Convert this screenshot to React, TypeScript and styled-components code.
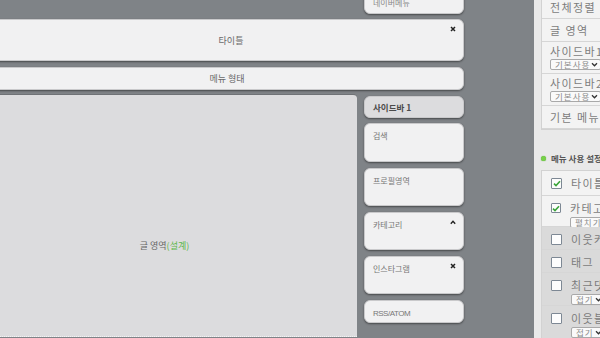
import styled, { createGlobalStyle } from 'styled-components'

const GlobalStyle = createGlobalStyle`
  html, body {
    margin: 0;
    padding: 0;
    background: #7f8387;
  }
  * { box-sizing: border-box; }
`

const Screen = styled.div`
  width: 600px;
  height: 338px;
  overflow: hidden;
  display: flex;
  background: #7f8387;
  font-family: "Noto Sans CJK KR", "Noto Sans", sans-serif;
`

const LeftCol = styled.div`
  flex-shrink: 0;
  width: 474px;
  margin-left: -10px;
  display: flex;
  flex-direction: column;
`

const NavRow = styled.div`
  display: flex;
  justify-content: flex-end;
  margin-top: -12px;
`

const Card = styled.div<{ $h: number; $tone?: 'light' | 'mid' }>`
  position: relative;
  height: ${p => p.$h}px;
  flex-shrink: 0;
  background: ${p => (p.$tone === 'mid' ? '#dcdcde' : '#f1f1f2')};
  border: 1px solid #c9c9cb;
  border-radius: 6px;
  box-shadow: 0 1px 2px rgba(0, 0, 0, 0.45);
  color: #6a6a6a;
`

const NavBox = styled(Card)`
  width: 100px;
  font-size: 8px;
  color: #8a8a8a;
  padding: 9px 0 0 8px;
  line-height: 10px;
`

const TitleBox = styled(Card)`
  margin-top: 5px;
  display: flex;
  align-items: center;
  justify-content: center;
  padding-left: 8px;
  font-size: 9px;
`

const MenuBox = styled(Card)`
  margin-top: 6px;
  display: flex;
  align-items: center;
  justify-content: center;
  font-size: 9px;
`

const BodyRow = styled.div`
  display: flex;
  gap: 7px;
  margin-top: 4px;
  height: 260px;
`

const Content = styled.div`
  width: 367px;
  height: 243px;
  background: #dcdcde;
  border-top: 1px solid #6f7276;
  border-bottom: 1px dotted #f4f4f4;
  border-radius: 0 4px 0 0;
  display: flex;
  align-items: center;
  justify-content: center;
  padding: 60px 18px 0 0;
  font-size: 9px;
  color: #666;
`

const Green = styled.span`
  color: #5cb84a;
`

const Sidebar = styled.div`
  width: 100px;
  display: flex;
  flex-direction: column;
  padding-top: 2px;
  gap: 6px;
`

const SideHead = styled(Card)`
  display: flex;
  align-items: center;
  padding-left: 8px;
  font-size: 8.5px;
  font-weight: 700;
  color: #4a4a4a;
  margin-bottom: -1px;
`

const SideItem = styled(Card)`
  padding: 7px 0 0 8px;
  font-size: 8px;
  line-height: 10px;
  color: #777;
`

const Latin = styled.span`
  font-family: "Liberation Sans", Arial, sans-serif;
  letter-spacing: -0.5px;
`

const Corner = styled.span<{ $top: number }>`
  position: absolute;
  top: ${p => p.$top}px;
  right: 7px;
  width: 6px;
  height: 6px;
  display: flex;
`

const Panel = styled.div`
  flex-shrink: 0;
  width: 160px;
  margin-left: 70px;
  margin-top: -6px;
  background: #e9e9e9;
  padding-left: 7px;
  display: flex;
  flex-direction: column;
`

const RowBox = styled.div`
  border: 1px solid #d2d2d2;
  border-right: none;
  background: #f3f3f3;
  display: flex;
  flex-direction: column;
`

const Row = styled.div<{ $h: number; $gray?: boolean }>`
  height: ${p => p.$h}px;
  border-bottom: 1px solid #d6d6d6;
  background: ${p => (p.$gray ? '#dadada' : '#f3f3f3')};
  padding: 0 0 0 8px;
  display: flex;
  flex-direction: column;
  justify-content: center;
  gap: 2px;
  font-size: 11px;
  line-height: 12px;
  letter-spacing: 1.4px;
  color: #7c7c7c;
  white-space: nowrap;
`

const CheckRow = styled(Row)`
  flex-direction: row;
  align-items: flex-start;
  justify-content: flex-start;
  padding: 6px 0 0 9px;
  gap: 9px;
`

const Stack = styled.div`
  display: flex;
  flex-direction: column;
  gap: 3px;
`

const Select = styled.span`
  display: inline-flex;
  align-items: center;
  gap: 1px;
  width: fit-content;
  height: 11px;
  padding: 0 2px 0 4px;
  border: 1px solid #a9a9a9;
  border-radius: 2px;
  background: #fafafa;
  font-size: 8.5px;
  line-height: 9px;
  letter-spacing: 1px;
  color: #8c8c8c;
`

const SubHead = styled.div`
  margin: 22px 0 6px 0;
  display: flex;
  align-items: center;
  gap: 5px;
  font-size: 8.5px;
  font-weight: 700;
  color: #555;
  white-space: nowrap;
`

const Dot = styled.span`
  width: 5px;
  height: 5px;
  border-radius: 50%;
  background: #77d04a;
  box-shadow: 0 0 1px #4a9a2a;
`

const Box = styled.span<{ $size: number }>`
  flex-shrink: 0;
  width: ${p => p.$size}px;
  height: ${p => p.$size}px;
  margin-top: 1px;
  border: 1px solid #7d8894;
  border-radius: 1px;
  background: #fdfdfd;
  display: flex;
  align-items: center;
  justify-content: center;
`

const Chevron = () => (
  <svg width="7" height="5" viewBox="0 0 7 5">
    <path d="M1 1.2 L3.5 3.8 L6 1.2" stroke="#333" strokeWidth="1.3" fill="none" />
  </svg>
)

const Cross = () => (
  <svg width="6" height="6" viewBox="0 0 6 6">
    <path d="M1 1 L5 5 M5 1 L1 5" stroke="#222" strokeWidth="1.5" />
  </svg>
)

const Up = () => (
  <svg width="6" height="5" viewBox="0 0 6 5">
    <path d="M0.8 3.8 L3 1.3 L5.2 3.8" stroke="#222" strokeWidth="1.4" fill="none" />
  </svg>
)

const Tick = () => (
  <svg width="8" height="7" viewBox="0 0 8 7">
    <path d="M1 3.6 L3 5.6 L7 1.2" stroke="#3aa43a" strokeWidth="1.6" fill="none" />
  </svg>
)

function Check({ on, size = 11 }: { on?: boolean; size?: number }) {
  return <Box $size={size}>{on && <Tick />}</Box>
}

function Dropdown({ label }: { label: string }) {
  return (
    <Select>
      {label}
      <Chevron />
    </Select>
  )
}

export default function App() {
  return (
    <>
      <GlobalStyle />
      <Screen>
        <LeftCol>
          <NavRow>
            <NavBox $h={26}>네이버메뉴</NavBox>
          </NavRow>
          <TitleBox $h={42}>
            타이틀
            <Corner $top={6}><Cross /></Corner>
          </TitleBox>
          <MenuBox $h={23}>메뉴 형태</MenuBox>
          <BodyRow>
            <Content>
              글 영역<Green>(설계)</Green>
            </Content>
            <Sidebar>
              <SideHead $h={22} $tone="mid">사이드바 1</SideHead>
              <SideItem $h={39}>검색</SideItem>
              <SideItem $h={38}>프로필영역</SideItem>
              <SideItem $h={38}>
                카테고리
                <Corner $top={7}><Up /></Corner>
              </SideItem>
              <SideItem $h={38}>
                인스타그램
                <Corner $top={6}><Cross /></Corner>
              </SideItem>
              <SideItem $h={23}><Latin>RSS/ATOM</Latin></SideItem>
            </Sidebar>
          </BodyRow>
        </LeftCol>
        <Panel>
          <RowBox>
            <Row $h={24}>전체정렬</Row>
            <Row $h={23}>글 영역</Row>
            <Row $h={32}>
              사이드바1
              <Dropdown label="기본사용" />
            </Row>
            <Row $h={32}>
              사이드바2
              <Dropdown label="기본사용" />
            </Row>
            <Row $h={23}>기본 메뉴</Row>
          </RowBox>
          <SubHead>
            <Dot />
            메뉴 사용 설정
          </SubHead>
          <RowBox>
            <CheckRow $h={25}>
              <Check on />
              타이틀
            </CheckRow>
            <CheckRow $h={31}>
              <Check on size={10} />
              <Stack>
                카테고리
                <Dropdown label="펼치기" />
              </Stack>
            </CheckRow>
            <CheckRow $h={23} $gray>
              <Check />
              이웃커넥트
            </CheckRow>
            <CheckRow $h={23} $gray>
              <Check />
              태그
            </CheckRow>
            <CheckRow $h={33} $gray>
              <Check />
              <Stack>
                최근댓글
                <Dropdown label="접기" />
              </Stack>
            </CheckRow>
            <CheckRow $h={34} $gray>
              <Check />
              <Stack>
                이웃블로그
                <Dropdown label="접기" />
              </Stack>
            </CheckRow>
          </RowBox>
        </Panel>
      </Screen>
    </>
  )
}
